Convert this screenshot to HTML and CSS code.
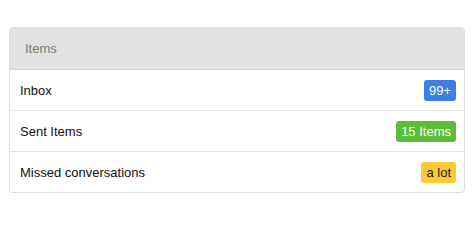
FILE: index.html
```html
<!DOCTYPE html>
<html>
<head>
<meta charset="utf-8">
<link rel="stylesheet" href="styles.css">
</head>
<body>
<div class="panel">
  <div class="panel-heading">Items</div>
  <ul class="list">
    <li class="item"><span>Inbox</span><span class="badge blue">99+</span></li>
    <li class="item"><span>Sent Items</span><span class="badge green">15 Items</span></li>
    <li class="item"><span>Missed conversations</span><span class="badge yellow">a lot</span></li>
  </ul>
</div>
</body>
</html>
```
FILE: styles.css
```css
html, body {
  margin: 0;
  padding: 0;
  background: #ffffff;
}
body {
  font-family: "Liberation Sans", Arial, sans-serif;
  font-size: 13px;
  color: #111;
  padding: 27px 9px 0 9px;
}
.panel {
  width: 456px;
  box-sizing: border-box;
  border: 1px solid #dcdcdc;
  border-radius: 4px;
  overflow: hidden;
  box-shadow: 0 1px 1px rgba(0,0,0,0.04);
}
.panel-heading {
  height: 41px;
  display: flex;
  align-items: center;
  padding: 0 15px;
  background: #e2e2e2;
  color: #7a7a7a;
  border-bottom: 1px solid #d6d6d6;
}
.list {
  list-style: none;
  margin: 0;
  padding: 0;
}
.item {
  height: 40px;
  display: flex;
  align-items: center;
  justify-content: space-between;
  padding: 0 8px 0 10px;
  border-bottom: 1px solid #e2e2e2;
}
.item:last-child {
  border-bottom: none;
}
.badge {
  height: 21px;
  line-height: 21px;
  padding: 0 5px;
  border-radius: 3px;
  color: #fff;
  font-size: 13px;
}
.blue { background: #3a7ee6; }
.green { background: #5cbd37; }
.yellow { background: #fdc935; color: #1a1a1a; }
```
